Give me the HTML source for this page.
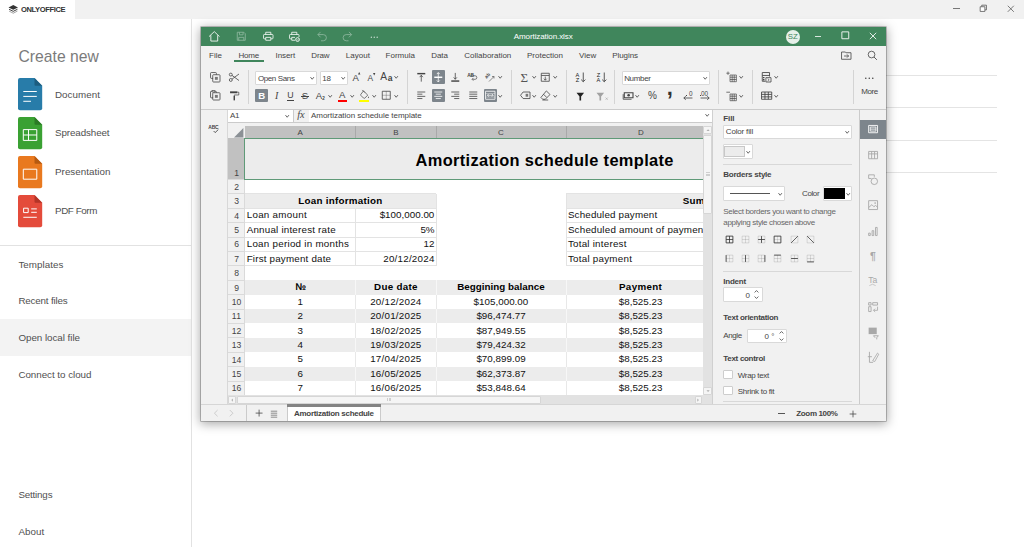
<!DOCTYPE html>
<html lang="en"><head><meta charset="utf-8"><title>ONLYOFFICE</title>
<style>
html,body{margin:0;padding:0}
body{width:1024px;height:547px;position:relative;overflow:hidden;background:#fff;font-family:"Liberation Sans",sans-serif;color:#444}
div,svg{position:absolute;box-sizing:border-box}
svg{overflow:visible}
.t{white-space:nowrap;line-height:1.2}
</style></head>
<body>
<div style="left:0px;top:0px;width:1024px;height:18.5px;background:#f1f1f1;"></div>
<div style="left:0px;top:0px;width:75px;height:18.5px;background:#fff;"></div>
<svg viewBox="0 0 20 20" style="left:8.25px;top:3.75px;width:10.5px;height:10.5px;color:#333;"><path d="M10 2 L19 6.5 L10 11 L1 6.5 Z" fill="currentColor"/><path d="M2 10 L10 14 L18 10" fill="none" stroke="currentColor" stroke-width="1.8"/><path d="M2 13.5 L10 17.5 L18 13.5" fill="none" stroke="currentColor" stroke-width="1.4" opacity=".6"/></svg>
<div class="t" style="left:21px;top:4.73px;font-size:7.6px;letter-spacing:-0.41px;font-weight:bold;color:#333;">ONLYOFFICE</div>
<div style="left:952.5px;top:8.3px;width:7.5px;height:1px;background:#777;"></div>
<svg viewBox="0 0 11 11" style="left:979px;top:4.4px;width:8.6px;height:8.6px;color:#555;"><path d="M3.5 3.5 V1.5 H9.5 V7.5 H7.5" fill="none" stroke="currentColor" stroke-width="1"/><path d="M1.5 3.5 H7.5 V9.5 H1.5 Z" fill="#fff" stroke="currentColor" stroke-width="1"/></svg>
<svg viewBox="0 0 10 10" style="left:1006.8px;top:5px;width:7.6px;height:7.6px;color:#555;"><path d="M1 1 L9 9 M9 1 L1 9" fill="none" stroke="currentColor" stroke-width="1"/></svg>
<div style="left:210px;top:74.6px;width:787px;height:1px;background:#e4e4e4;"></div>
<div style="left:210px;top:107.3px;width:787px;height:1px;background:#e4e4e4;"></div>
<div style="left:210px;top:139.5px;width:787px;height:1px;background:#e4e4e4;"></div>
<div style="left:210px;top:171.7px;width:787px;height:1px;background:#e4e4e4;"></div>
<div style="left:191px;top:18.5px;width:1px;height:528.5px;background:#e2e2e2;"></div>
<div class="t" style="left:18.4px;top:48.06px;font-size:15.7px;letter-spacing:0.03px;color:#7b7b7b;">Create new</div>
<svg viewBox="0 0 24.2 32.3" style="left:18.1px;top:78.1px;width:24.2px;height:32.3px"><path d="M2 0 H16.5 L24.2 7.7 V30.3 Q24.2 32.3 22.2 32.3 H2 Q0 32.3 0 30.3 V2 Q0 0 2 0 Z" fill="#287ca9"/><path d="M16.5 0 L24.2 7.7 H17.5 Q16.5 7.7 16.5 6.7 Z" fill="#1c5d80"/><path d="M5.3 13.5 H18.8 M5.3 18.4 H18.8 M5.3 23.3 H13" stroke="#fff" stroke-width="1" fill="none"/></svg>
<svg viewBox="0 0 24.2 32.3" style="left:18.1px;top:117.2px;width:24.2px;height:32.3px"><path d="M2 0 H16.5 L24.2 7.7 V30.3 Q24.2 32.3 22.2 32.3 H2 Q0 32.3 0 30.3 V2 Q0 0 2 0 Z" fill="#3aa133"/><path d="M16.5 0 L24.2 7.7 H17.5 Q16.5 7.7 16.5 6.7 Z" fill="#2a7a25"/><path d="M5.3 12.6 H18.8 V23.4 H5.3 Z M5.3 18 H18.8 M10.5 12.6 V23.4" stroke="#fff" stroke-width="1" fill="none"/></svg>
<svg viewBox="0 0 24.2 32.3" style="left:18.1px;top:156.3px;width:24.2px;height:32.3px"><path d="M2 0 H16.5 L24.2 7.7 V30.3 Q24.2 32.3 22.2 32.3 H2 Q0 32.3 0 30.3 V2 Q0 0 2 0 Z" fill="#e9791f"/><path d="M16.5 0 L24.2 7.7 H17.5 Q16.5 7.7 16.5 6.7 Z" fill="#b55a12"/><path d="M5.3 13.2 H18.8 V23.2 H5.3 Z" stroke="#fff" stroke-width="1" fill="none"/></svg>
<svg viewBox="0 0 24.2 32.3" style="left:18.1px;top:195.4px;width:24.2px;height:32.3px"><path d="M2 0 H16.5 L24.2 7.7 V30.3 Q24.2 32.3 22.2 32.3 H2 Q0 32.3 0 30.3 V2 Q0 0 2 0 Z" fill="#e44b3b"/><path d="M16.5 0 L24.2 7.7 H17.5 Q16.5 7.7 16.5 6.7 Z" fill="#b33528"/><path d="M5.6 13.2 H10.2 V17.6 H5.6 Z M13.2 13.9 H18.8 M13.2 17.3 H18.8 M5.3 22.3 H18.8" stroke="#fff" stroke-width="1" fill="none"/></svg>
<div class="t" style="left:55px;top:88.53px;font-size:9.8px;letter-spacing:0.04px;color:#505050;">Document</div>
<div class="t" style="left:55px;top:127.43px;font-size:9.8px;letter-spacing:-0.1px;color:#505050;">Spreadsheet</div>
<div class="t" style="left:55px;top:166.43px;font-size:9.8px;letter-spacing:0.04px;color:#505050;">Presentation</div>
<div class="t" style="left:55px;top:205.43px;font-size:9.8px;letter-spacing:-0.4px;color:#505050;">PDF Form</div>
<div style="left:0px;top:245.1px;width:191px;height:1px;background:#e2e2e2;"></div>
<div style="left:0px;top:319.2px;width:191px;height:36.4px;background:#f3f3f3;"></div>
<div class="t" style="left:18.4px;top:258.83px;font-size:9.8px;letter-spacing:0.05px;color:#505050;">Templates</div>
<div class="t" style="left:18.4px;top:295.43px;font-size:9.8px;letter-spacing:-0.18px;color:#505050;">Recent files</div>
<div class="t" style="left:18.4px;top:332.03px;font-size:9.8px;letter-spacing:-0.03px;color:#505050;">Open local file</div>
<div class="t" style="left:18.4px;top:368.63px;font-size:9.8px;letter-spacing:-0.03px;color:#505050;">Connect to cloud</div>
<div class="t" style="left:18.4px;top:489.43px;font-size:9.8px;letter-spacing:-0.18px;color:#505050;">Settings</div>
<div class="t" style="left:18.4px;top:525.73px;font-size:9.8px;letter-spacing:0.04px;color:#505050;">About</div>
<div style="left:200.6px;top:26.9px;width:685.4px;height:393.9px;background:#f1f1f1;box-shadow:0 2px 10px 1px rgba(0,0,0,.34),0 0 0 .6px rgba(0,0,0,.36);"></div>
<div style="left:200.6px;top:26.9px;width:685.4px;height:18.9px;background:#40865c;"></div>
<svg viewBox="0 0 20 20" style="left:207.12px;top:28.73px;width:14.55px;height:14.55px;color:#fff;"><path d="M2.8 10.4 L10 3.6 L17.2 10.4 M5.3 8.6 V16.6 H14.7 V8.6" fill="none" stroke="currentColor" stroke-width="1.15"/></svg>
<svg viewBox="0 0 20 20" style="left:233.72px;top:28.73px;width:14.55px;height:14.55px;color:#fff;opacity:0.4;"><path d="M4.5 4.5 H13.5 L15.5 6.5 V15.5 H4.5 Z M7.5 4.5 V8 H12.5 V4.5 M6.5 15.5 V11.5 H13.5 V15.5" fill="none" stroke="currentColor" stroke-width="1.2"/></svg>
<svg viewBox="0 0 20 20" style="left:260.73px;top:28.73px;width:14.55px;height:14.55px;color:#fff;"><path d="M6.5 7.5 V4.5 H13.5 V7.5 M6.5 13.5 H4.5 Q3.5 13.5 3.5 12.5 V8.5 Q3.5 7.5 4.5 7.5 H15.5 Q16.5 7.5 16.5 8.5 V12.5 Q16.5 13.5 15.5 13.5 H13.5 M6.5 11.5 H13.5 V15.5 H6.5 Z" fill="none" stroke="currentColor" stroke-width="1.1"/></svg>
<svg viewBox="0 0 20 20" style="left:287.23px;top:28.73px;width:14.55px;height:14.55px;color:#fff;"><path d="M6.5 7.5 V4.5 H13.5 V7.5 M6.5 13.5 H4.5 Q3.5 13.5 3.5 12.5 V8.5 Q3.5 7.5 4.5 7.5 H15.5 Q16.5 7.5 16.5 8.5 V11 M6.5 15.5 V11.5 H11 M6.5 15.5 H11" fill="none" stroke="currentColor" stroke-width="1.1"/><circle cx="14.5" cy="14.5" r="2.6" fill="none" stroke="currentColor" stroke-width="1.2"/><path d="M13.3 14.5 L14.3 15.5 L15.8 13.6" fill="none" stroke="currentColor" stroke-width="0.9"/></svg>
<svg viewBox="0 0 20 20" style="left:313.95px;top:28.45px;width:15.5px;height:15.5px;color:#fff;opacity:0.4;"><path d="M5 8.5 H12 A4 4 0 0 1 12 16.5 H9 M8.5 5 L5 8.5 L8.5 12" fill="none" stroke="currentColor" stroke-width="1.1"/></svg>
<svg viewBox="0 0 20 20" style="left:339.75px;top:28.45px;width:15.5px;height:15.5px;color:#fff;opacity:0.4;"><path d="M15 8.5 H8 A4 4 0 0 0 8 16.5 H11 M11.5 5 L15 8.5 L11.5 12" fill="none" stroke="currentColor" stroke-width="1.1"/></svg>
<svg viewBox="0 0 20 20" style="left:366.93px;top:29.52px;width:14.55px;height:14.55px;color:#fff;opacity:0.7;"><circle cx="6" cy="10" r="1" fill="currentColor"/><circle cx="10" cy="10" r="1" fill="currentColor"/><circle cx="14" cy="10" r="1" fill="currentColor"/></svg>
<div class="t" style="left:513.8px;top:32.09px;font-size:8px;letter-spacing:-0.1px;color:#fff;">Amortization.xlsx</div>
<div style="left:785.9px;top:29.7px;width:14px;height:14px;background:#e6f0e9;border-radius:50%;"></div>
<div class="t" style="left:787.8px;top:32.31px;font-size:7.8px;letter-spacing:0.12px;color:#40865c;">SZ</div>
<div style="left:814.6px;top:35.7px;width:6.8px;height:1px;background:rgba(255,255,255,.8);"></div>
<svg viewBox="0 0 10 10" style="left:841px;top:31.4px;width:8.6px;height:8.6px;color:#fff;opacity:0.92;"><path d="M1 1 H9 V9 H1 Z" fill="none" stroke="currentColor" stroke-width="1.1" stroke-linejoin="miter"/></svg>
<svg viewBox="0 0 10 10" style="left:868.5px;top:31.7px;width:8px;height:8px;color:#fff;opacity:0.95;"><path d="M1 1 L9 9 M9 1 L1 9" fill="none" stroke="currentColor" stroke-width="1.1"/></svg>
<div class="t" style="left:209px;top:51.09px;font-size:8px;letter-spacing:0.03px;">File</div>
<div class="t" style="left:238.5px;top:51.09px;font-size:8px;letter-spacing:-0.21px;">Home</div>
<div class="t" style="left:275.5px;top:51.09px;font-size:8px;letter-spacing:-0.08px;">Insert</div>
<div class="t" style="left:311.3px;top:51.09px;font-size:8px;letter-spacing:-0.12px;">Draw</div>
<div class="t" style="left:345.8px;top:51.09px;font-size:8px;letter-spacing:0.03px;">Layout</div>
<div class="t" style="left:385.5px;top:51.09px;font-size:8px;letter-spacing:0.02px;">Formula</div>
<div class="t" style="left:431.2px;top:51.09px;font-size:8px;letter-spacing:-0.02px;">Data</div>
<div class="t" style="left:464.3px;top:51.09px;font-size:8px;letter-spacing:-0.01px;">Collaboration</div>
<div class="t" style="left:527px;top:51.09px;font-size:8px;letter-spacing:0px;">Protection</div>
<div class="t" style="left:579px;top:51.09px;font-size:8px;letter-spacing:0.03px;">View</div>
<div class="t" style="left:612.3px;top:51.09px;font-size:8px;letter-spacing:-0.08px;">Plugins</div>
<div style="left:234px;top:60.4px;width:29.5px;height:1.4px;background:#40865c;"></div>
<svg viewBox="0 0 20 20" style="left:838.93px;top:48.02px;width:14.55px;height:14.55px;color:#444;"><path d="M3.5 5.5 H8.5 L9.5 6.5 H16.5 V15.5 H3.5 Z M7 11 H13 M11 8.8 L13.2 11 L11 13.2" fill="none" stroke="currentColor" stroke-width="1.1"/></svg>
<svg viewBox="0 0 20 20" style="left:865.23px;top:48.23px;width:14.55px;height:14.55px;color:#444;"><circle cx="9" cy="9" r="4.6" fill="none" stroke="currentColor" stroke-width="1.1"/><path d="M12.4 12.4 L16.3 16.3" fill="none" stroke="currentColor" stroke-width="1.2"/></svg>
<div style="left:200.6px;top:108.7px;width:685.4px;height:1px;background:#cbcbcb;"></div>
<div style="left:248.3px;top:69.5px;width:1px;height:34.5px;background:#d4d4d4;"></div>
<div style="left:407px;top:69.5px;width:1px;height:34.5px;background:#d4d4d4;"></div>
<div style="left:510.8px;top:69.5px;width:1px;height:34.5px;background:#d4d4d4;"></div>
<div style="left:565.8px;top:69.5px;width:1px;height:34.5px;background:#d4d4d4;"></div>
<div style="left:614px;top:69.5px;width:1px;height:34.5px;background:#d4d4d4;"></div>
<div style="left:717.8px;top:69.5px;width:1px;height:34.5px;background:#d4d4d4;"></div>
<div style="left:752px;top:69.5px;width:1px;height:34.5px;background:#d4d4d4;"></div>
<div style="left:853px;top:69.5px;width:1px;height:34.5px;background:#d4d4d4;"></div>
<svg viewBox="0 0 20 20" style="left:207.53px;top:70.22px;width:14.55px;height:14.55px;color:#444;"><path d="M7 11.5 H4.5 Q3.5 11.5 3.5 10.5 V4.5 Q3.5 3.5 4.5 3.5 H10.5 Q11.5 3.5 11.5 4.5 V6.5" fill="none" stroke="currentColor" stroke-width="1.1"/><path d="M7.5 6.5 H15.5 Q16.5 6.5 16.5 7.5 V15.5 Q16.5 16.5 15.5 16.5 H7.5 Q6.5 16.5 6.5 15.5 V7.5 Q6.5 6.5 7.5 6.5 Z" fill="none" stroke="currentColor" stroke-width="1.1"/><path d="M9.5 9.5 H13.5 V13.5 H9.5 Z" fill="currentColor" opacity=".7"/></svg>
<svg viewBox="0 0 20 20" style="left:227.12px;top:69.92px;width:14.55px;height:14.55px;color:#444;"><circle cx="5.2" cy="6.3" r="2" fill="none" stroke="currentColor" stroke-width="1.1"/><circle cx="5.2" cy="13.7" r="2" fill="none" stroke="currentColor" stroke-width="1.1"/><path d="M6.9 7.4 L16.5 14.5 M6.9 12.6 L16.5 5.5" fill="none" stroke="currentColor" stroke-width="1.1"/></svg>
<svg viewBox="0 0 20 20" style="left:207.53px;top:88.32px;width:14.55px;height:14.55px;color:#444;"><path d="M7 13.5 H4.5 Q3.5 13.5 3.5 12.5 V5.5 Q3.5 4.5 4.5 4.5 H5.5 M9.5 4.5 H10.5 Q11.5 4.5 11.5 5.5 V6.5" fill="none" stroke="currentColor" stroke-width="1.1"/><path d="M5.5 3.5 H9.5 V5.5 H5.5 Z" fill="none" stroke="currentColor" stroke-width="1"/><path d="M7.5 6.5 H15.5 Q16.5 6.5 16.5 7.5 V15.5 Q16.5 16.5 15.5 16.5 H7.5 Q6.5 16.5 6.5 15.5 V7.5 Q6.5 6.5 7.5 6.5 Z" fill="none" stroke="currentColor" stroke-width="1.1"/><path d="M9.5 9.5 H13.5 V13.5 H9.5 Z" fill="currentColor" opacity=".7"/></svg>
<svg viewBox="0 0 20 20" style="left:227.22px;top:88.32px;width:14.55px;height:14.55px;color:#444;"><path d="M4.2 4.6 H14.2 V7.2 H4.2 Z" fill="currentColor"/><path d="M14.2 5.8 H16.2 V9.6 H10 V11" fill="none" stroke="currentColor" stroke-width="1"/><path d="M9 11 H11 V17 H9 Z" fill="currentColor"/></svg>
<div style="left:255.3px;top:70.5px;width:62.1px;height:14.5px;background:#fff;border:.7px solid #d9d9d9;border-radius:1px;"></div>
<div class="t" style="left:257.9px;top:73.74px;font-size:8px;letter-spacing:-0.38px;">Open Sans</div>
<svg viewBox="0 0 8 8" style="left:310px;top:75.75px;width:4.4px;height:4.4px;color:#444;"><path d="M0.9 2.1 L4 5.9 L7.1 2.1" fill="none" stroke="currentColor" stroke-width="1.5"/></svg>
<div style="left:319.6px;top:70.5px;width:28.4px;height:14.5px;background:#fff;border:.7px solid #d9d9d9;border-radius:1px;"></div>
<div class="t" style="left:322.2px;top:73.74px;font-size:8px;letter-spacing:-0.15px;">18</div>
<svg viewBox="0 0 8 8" style="left:340.6px;top:75.75px;width:4.4px;height:4.4px;color:#444;"><path d="M0.9 2.1 L4 5.9 L7.1 2.1" fill="none" stroke="currentColor" stroke-width="1.5"/></svg>
<div class="t" style="left:352.4px;top:71.75px;font-size:9.6px;">A</div>
<svg viewBox="0 0 3 3" style="left:358.4px;top:72.4px;width:2.4px;height:2.4px;color:#444;"><path d="M0 3 L1.5 0 L3 3 Z" fill="currentColor"/></svg>
<div class="t" style="left:367.5px;top:72.76px;font-size:8.4px;">A</div>
<svg viewBox="0 0 3 3" style="left:372.8px;top:72.6px;width:2.4px;height:2.4px;color:#444;"><path d="M0 0 L1.5 3 L3 0 Z" fill="currentColor"/></svg>
<div class="t" style="left:380.2px;top:71.2px;font-size:10.2px;">A</div>
<div class="t" style="left:387.64px;top:73.3px;font-size:8.5px;font-weight:bold;">a</div>
<svg viewBox="0 0 8 8" style="left:394.4px;top:75.3px;width:4.4px;height:4.4px;color:#444;"><path d="M0.9 2.1 L4 5.9 L7.1 2.1" fill="none" stroke="currentColor" stroke-width="1.5"/></svg>
<div style="left:255px;top:89px;width:13.3px;height:13.3px;background:#7d858c;border-radius:1px;"></div>
<div class="t" style="left:258.23px;top:90.05px;font-size:9.6px;font-weight:bold;color:#fff;">B</div>
<div class="t" style="left:275.01px;top:89.81px;font-size:10px;font-style:italic;font-family:'Liberation Serif',serif;">I</div>
<div class="t" style="left:287.32px;top:90.02px;font-size:8.8px;">U</div>
<div style="left:286.8px;top:100px;width:7.4px;height:0.8px;background:#444;"></div>
<div class="t" style="left:301.8px;top:90.05px;font-size:9.6px;">S</div>
<div style="left:300.6px;top:95.8px;width:8.8px;height:0.8px;background:#444;"></div>
<div class="t" style="left:315.8px;top:89.75px;font-size:9.6px;">A</div>
<div class="t" style="left:322.32px;top:95.99px;font-size:4.6px;font-weight:bold;">2</div>
<svg viewBox="0 0 8 8" style="left:327.8px;top:93.8px;width:4.4px;height:4.4px;color:#444;"><path d="M0.9 2.1 L4 5.9 L7.1 2.1" fill="none" stroke="currentColor" stroke-width="1.5"/></svg>
<div class="t" style="left:339px;top:88.95px;font-size:9.6px;">A</div>
<div style="left:337.5px;top:100px;width:9.6px;height:2.1px;background:#f00;"></div>
<svg viewBox="0 0 8 8" style="left:349.8px;top:93.8px;width:4.4px;height:4.4px;color:#444;"><path d="M0.9 2.1 L4 5.9 L7.1 2.1" fill="none" stroke="currentColor" stroke-width="1.5"/></svg>
<svg viewBox="0 0 20 20" style="left:357.5px;top:87.9px;width:13px;height:13px;color:#444;"><path d="M8.5 4.5 L15 11 L10.5 15.5 Q9.5 16.3 8.5 15.5 L4.5 11.5 Q3.7 10.5 4.5 9.5 Z M6.5 3 L10.5 7" fill="none" stroke="currentColor" stroke-width="1.1"/><path d="M16 12.5 Q17.6 15 16 15.6 Q14.4 15 16 12.5Z" fill="currentColor"/></svg>
<div style="left:359.2px;top:100px;width:9.8px;height:2.1px;background:#ff0;"></div>
<svg viewBox="0 0 8 8" style="left:371.8px;top:93.8px;width:4.4px;height:4.4px;color:#444;"><path d="M0.9 2.1 L4 5.9 L7.1 2.1" fill="none" stroke="currentColor" stroke-width="1.5"/></svg>
<svg viewBox="0 0 20 20" style="left:378.73px;top:88.32px;width:14.55px;height:14.55px;color:#444;"><path d="M4.5 4.5 H15.5 V15.5 H4.5 Z" fill="none" stroke="currentColor" stroke-width="1.1"/><path d="M10 4.5 V15.5 M4.5 10 H15.5" fill="none" stroke="currentColor" stroke-width="0.8" opacity=".6"/></svg>
<svg viewBox="0 0 8 8" style="left:394.4px;top:93.8px;width:4.4px;height:4.4px;color:#444;"><path d="M0.9 2.1 L4 5.9 L7.1 2.1" fill="none" stroke="currentColor" stroke-width="1.5"/></svg>
<svg viewBox="0 0 20 20" style="left:413.73px;top:69.92px;width:14.55px;height:14.55px;color:#444;"><path d="M4.5 5 H15.5" fill="none" stroke="currentColor" stroke-width="2"/><path d="M10 7 V16 M7.8 9.8 L10 7.4 L12.2 9.8" fill="none" stroke="currentColor" stroke-width="1.1"/></svg>
<div style="left:431.5px;top:70.4px;width:13.5px;height:13.5px;background:#7d858c;border-radius:1px;"></div>
<svg viewBox="0 0 20 20" style="left:430.93px;top:69.92px;width:14.55px;height:14.55px;color:#fff;"><path d="M4.5 10 H15.5" fill="none" stroke="currentColor" stroke-width="2"/><path d="M10 3.5 V16.5 M8 5.6 L10 3.6 L12 5.6 M8 14.4 L10 16.4 L12 14.4" fill="none" stroke="currentColor" stroke-width="1.1"/></svg>
<svg viewBox="0 0 20 20" style="left:448.33px;top:69.92px;width:14.55px;height:14.55px;color:#444;"><path d="M4.5 15.2 H15.5" fill="none" stroke="currentColor" stroke-width="2"/><path d="M10 4 V13 M7.8 10.2 L10 12.6 L12.2 10.2" fill="none" stroke="currentColor" stroke-width="1.1"/></svg>
<div class="t" style="left:467.13px;top:72.68px;font-size:4.8px;font-weight:bold;">AB</div>
<svg viewBox="0 0 20 20" style="left:469.1px;top:72.9px;width:11px;height:11px;color:#444;"><path d="M3 5 H11 A3 3 0 0 1 11 11.5 H6 M8 9 L5.5 11.5 L8 14" fill="none" stroke="currentColor" stroke-width="1.2"/></svg>
<div class="t" style="left:485.4px;top:73.08px;font-size:4.8px;font-weight:bold;transform:rotate(-45deg);">ab</div>
<svg viewBox="0 0 20 20" style="left:486.5px;top:73.6px;width:10px;height:10px;color:#444;"><path d="M4 15 L14 5 M10 5 H14 V9" fill="none" stroke="currentColor" stroke-width="1.2"/></svg>
<svg viewBox="0 0 8 8" style="left:498px;top:75.4px;width:4.4px;height:4.4px;color:#444;"><path d="M0.9 2.1 L4 5.9 L7.1 2.1" fill="none" stroke="currentColor" stroke-width="1.5"/></svg>
<svg viewBox="0 0 20 20" style="left:413.73px;top:88.32px;width:14.55px;height:14.55px;color:#444;"><path d="M4.5 5.5 H15.5 M4.5 8.5 H11.5 M4.5 11.5 H15.5 M4.5 14.5 H11.5 " fill="none" stroke="currentColor" stroke-width="1.1"/></svg>
<div style="left:431.5px;top:88.9px;width:13.5px;height:13.4px;background:#7d858c;border-radius:1px;"></div>
<svg viewBox="0 0 20 20" style="left:430.93px;top:88.32px;width:14.55px;height:14.55px;color:#fff;"><path d="M4.5 5.5 H15.5 M6.5 8.5 H13.5 M4.5 11.5 H15.5 M6.5 14.5 H13.5 " fill="none" stroke="currentColor" stroke-width="1.1"/></svg>
<svg viewBox="0 0 20 20" style="left:448.33px;top:88.32px;width:14.55px;height:14.55px;color:#444;"><path d="M4.5 5.5 H15.5 M8.5 8.5 H15.5 M4.5 11.5 H15.5 M8.5 14.5 H15.5 " fill="none" stroke="currentColor" stroke-width="1.1"/></svg>
<svg viewBox="0 0 20 20" style="left:465.73px;top:88.32px;width:14.55px;height:14.55px;color:#444;"><path d="M4.5 5.5 H15.5 M4.5 8.5 H15.5 M4.5 11.5 H15.5 M4.5 14.5 H15.5 " fill="none" stroke="currentColor" stroke-width="1.1"/></svg>
<div style="left:483.7px;top:88.9px;width:13.5px;height:13.4px;background:#7d858c;border-radius:1px;"></div>
<svg viewBox="0 0 20 20" style="left:483.12px;top:88.32px;width:14.55px;height:14.55px;color:#fff;"><path d="M3.5 4.5 H16.5 V15.5 H3.5 Z" fill="none" stroke="currentColor" stroke-width="1.1"/><path d="M3.5 7.5 H16.5 M3.5 12.5 H16.5" fill="none" stroke="currentColor" stroke-width="0.8" opacity=".7"/><path d="M6 10 H14 M8 8 L6 10 L8 12 M12 8 L14 10 L12 12" fill="none" stroke="currentColor" stroke-width="1"/></svg>
<svg viewBox="0 0 8 8" style="left:498px;top:93.8px;width:4.4px;height:4.4px;color:#444;"><path d="M0.9 2.1 L4 5.9 L7.1 2.1" fill="none" stroke="currentColor" stroke-width="1.5"/></svg>
<div class="t" style="left:520.38px;top:69.95px;font-size:13px;color:#555;font-family:'Liberation Serif',serif;">Σ</div>
<svg viewBox="0 0 8 8" style="left:532.4px;top:75.4px;width:4.4px;height:4.4px;color:#444;"><path d="M0.9 2.1 L4 5.9 L7.1 2.1" fill="none" stroke="currentColor" stroke-width="1.5"/></svg>
<svg viewBox="0 0 20 20" style="left:538.12px;top:69.92px;width:14.55px;height:14.55px;color:#444;"><path d="M4.5 4.5 H15.5 V15.5 H4.5 Z M4.5 7.5 H15.5" fill="none" stroke="currentColor" stroke-width="1.1"/><path d="M10 9 V14 M8 12 L10 14 L12 12" fill="none" stroke="currentColor" stroke-width="1"/></svg>
<svg viewBox="0 0 8 8" style="left:553.2px;top:75.4px;width:4.4px;height:4.4px;color:#444;"><path d="M0.9 2.1 L4 5.9 L7.1 2.1" fill="none" stroke="currentColor" stroke-width="1.5"/></svg>
<svg viewBox="0 0 20 20" style="left:517.52px;top:88.32px;width:14.55px;height:14.55px;color:#444;"><path d="M7 5.5 H16.5 V14.5 H7 L3.5 10 Z" fill="none" stroke="currentColor" stroke-width="1.1"/><path d="M10.5 8 H14 V12 H10.5 Z" fill="currentColor" opacity=".7"/></svg>
<svg viewBox="0 0 8 8" style="left:532.4px;top:93.8px;width:4.4px;height:4.4px;color:#444;"><path d="M0.9 2.1 L4 5.9 L7.1 2.1" fill="none" stroke="currentColor" stroke-width="1.5"/></svg>
<svg viewBox="0 0 20 20" style="left:538.12px;top:88.32px;width:14.55px;height:14.55px;color:#444;"><path d="M11.5 4 L16.5 9 L10 15.5 H6.5 L4 13 Z M7.5 8.5 L12 13 M6 16.5 H14" fill="none" stroke="currentColor" stroke-width="1.1"/></svg>
<svg viewBox="0 0 8 8" style="left:553.2px;top:93.8px;width:4.4px;height:4.4px;color:#444;"><path d="M0.9 2.1 L4 5.9 L7.1 2.1" fill="none" stroke="currentColor" stroke-width="1.5"/></svg>
<div class="t" style="left:575.6px;top:71.85px;font-size:5.7px;color:#222;">A</div>
<div class="t" style="left:575.76px;top:77.15px;font-size:5.7px;color:#222;">Z</div>
<svg viewBox="0 0 20 20" style="left:577.55px;top:71.95px;width:10.5px;height:10.5px;color:#444;"><path d="M10 1 V18.5 M6 14.5 L10 18.5 L14 14.5" fill="none" stroke="currentColor" stroke-width="1.7"/></svg>
<div class="t" style="left:596.76px;top:71.85px;font-size:5.7px;color:#222;">Z</div>
<div class="t" style="left:596.6px;top:77.15px;font-size:5.7px;color:#222;">A</div>
<svg viewBox="0 0 20 20" style="left:598.55px;top:71.95px;width:10.5px;height:10.5px;color:#444;"><path d="M10 1 V18.5 M6 14.5 L10 18.5 L14 14.5" fill="none" stroke="currentColor" stroke-width="1.7"/></svg>
<svg viewBox="0 0 20 20" style="left:573.7px;top:89.5px;width:12.6px;height:12.6px;color:#222;"><path d="M4 4.5 H16 L11.3 10.5 V16.5 H8.7 V10.5 Z" fill="currentColor"/></svg>
<svg viewBox="0 0 20 20" style="left:593.7px;top:89.5px;width:12.6px;height:12.6px;color:#444;opacity:0.45;"><path d="M4 4.5 H16 L11.3 10.5 V16.5 H8.7 V10.5 Z" fill="currentColor"/></svg>
<svg viewBox="0 0 6 6" style="left:604.6px;top:96.9px;width:3.4px;height:3.4px;color:#444;opacity:0.45;"><path d="M1 1 L5 5 M5 1 L1 5" fill="none" stroke="currentColor" stroke-width="1"/></svg>
<div style="left:621.6px;top:70.5px;width:88.8px;height:14.5px;background:#fff;border:.7px solid #d9d9d9;border-radius:1px;"></div>
<div class="t" style="left:624.2px;top:73.74px;font-size:8px;letter-spacing:-0.34px;">Number</div>
<svg viewBox="0 0 8 8" style="left:703px;top:75.75px;width:4.4px;height:4.4px;color:#444;"><path d="M0.9 2.1 L4 5.9 L7.1 2.1" fill="none" stroke="currentColor" stroke-width="1.5"/></svg>
<svg viewBox="0 0 20 20" style="left:620.73px;top:88.32px;width:14.55px;height:14.55px;color:#444;"><path d="M4.5 6.5 H16.5 V13.5 H4.5 Z" fill="none" stroke="currentColor" stroke-width="1.5"/><circle cx="10.5" cy="10" r="1.8" fill="currentColor"/><path d="M3 8.5 V15.5 H14.5" fill="none" stroke="currentColor" stroke-width="1.1"/></svg>
<svg viewBox="0 0 8 8" style="left:635.4px;top:93.8px;width:4.4px;height:4.4px;color:#444;"><path d="M0.9 2.1 L4 5.9 L7.1 2.1" fill="none" stroke="currentColor" stroke-width="1.5"/></svg>
<div class="t" style="left:648.05px;top:89.81px;font-size:10px;">%</div>
<div class="t" style="left:666.74px;top:74.95px;font-size:22px;font-weight:bold;color:#333;">,</div>
<div class="t" style="left:689.02px;top:90.33px;font-size:6.4px;">0</div>
<div style="left:686.2px;top:95.2px;width:1.1px;height:1.1px;background:#444;"></div>
<svg viewBox="0 0 18 18" style="left:682.8px;top:93.3px;width:10px;height:10px;color:#444;"><path d="M1.5 9 H17 M5 5.8 L1.5 9 L5 12.2" fill="none" stroke="currentColor" stroke-width="1.5"/></svg>
<div class="t" style="left:701.1px;top:90.33px;font-size:6.4px;letter-spacing:-0.26px;">00</div>
<div style="left:699.6px;top:95.2px;width:1.1px;height:1.1px;background:#444;"></div>
<svg viewBox="0 0 18 18" style="left:699.6px;top:93.3px;width:10px;height:10px;color:#444;"><path d="M1 9 H16.5 M13 5.8 L16.5 9 L13 12.2" fill="none" stroke="currentColor" stroke-width="1.5"/></svg>
<svg viewBox="0 0 20 20" style="left:724.6px;top:70.3px;width:13.4px;height:13.4px;color:#444;"><path d="M7.5 7.5 H17 V17.5 H7.5 Z M10.7 7.5 V17.5 M13.8 7.5 V17.5 M7.5 10.8 H17 M7.5 14.2 H17" fill="none" stroke="currentColor" stroke-width="1"/><path d="M2 4.8 H7 M4.5 2.3 V7.3" fill="none" stroke="currentColor" stroke-width="1"/></svg>
<svg viewBox="0 0 8 8" style="left:739.4px;top:75.4px;width:4.4px;height:4.4px;color:#444;"><path d="M0.9 2.1 L4 5.9 L7.1 2.1" fill="none" stroke="currentColor" stroke-width="1.5"/></svg>
<svg viewBox="0 0 20 20" style="left:724.6px;top:88.7px;width:13.4px;height:13.4px;color:#444;"><path d="M7.5 7.5 H17 V17.5 H7.5 Z M10.7 7.5 V17.5 M13.8 7.5 V17.5 M7.5 10.8 H17 M7.5 14.2 H17" fill="none" stroke="currentColor" stroke-width="1"/><path d="M2 4.8 H7.5" fill="none" stroke="currentColor" stroke-width="1.1"/></svg>
<svg viewBox="0 0 8 8" style="left:739.4px;top:93.8px;width:4.4px;height:4.4px;color:#444;"><path d="M0.9 2.1 L4 5.9 L7.1 2.1" fill="none" stroke="currentColor" stroke-width="1.5"/></svg>
<svg viewBox="0 0 20 20" style="left:758.73px;top:69.92px;width:14.55px;height:14.55px;color:#444;"><path d="M4.5 3.5 H14.5 V9 M4.5 3.5 V15.5 H8.5 M4.5 7.5 H14.5" fill="none" stroke="currentColor" stroke-width="1.2"/><path d="M9.5 10.5 H16.5 V16.5 H9.5 Z" fill="none" stroke="currentColor" stroke-width="1.1"/><path d="M5.5 9.5 H7.5 V11.5 H5.5 Z M5.5 12.5 H7.5 V14.5 H5.5 Z" fill="currentColor"/><path d="M12 12 L14 13.5 L12 15" fill="none" stroke="currentColor" stroke-width="0.9"/></svg>
<svg viewBox="0 0 8 8" style="left:774.1px;top:75.4px;width:4.4px;height:4.4px;color:#444;"><path d="M0.9 2.1 L4 5.9 L7.1 2.1" fill="none" stroke="currentColor" stroke-width="1.5"/></svg>
<svg viewBox="0 0 20 20" style="left:758.73px;top:88.32px;width:14.55px;height:14.55px;color:#444;"><path d="M3.5 5.5 H17.5 V15.5 H3.5 Z M3.5 8.8 H17.5 M3.5 12.2 H17.5 M8.2 5.5 V15.5 M12.8 5.5 V15.5" fill="none" stroke="currentColor" stroke-width="1.2"/></svg>
<svg viewBox="0 0 8 8" style="left:774.1px;top:93.8px;width:4.4px;height:4.4px;color:#444;"><path d="M0.9 2.1 L4 5.9 L7.1 2.1" fill="none" stroke="currentColor" stroke-width="1.5"/></svg>
<svg viewBox="0 0 20 20" style="left:862.12px;top:71.32px;width:14.55px;height:14.55px;color:#444;"><circle cx="5.2" cy="10" r="1.1" fill="currentColor"/><circle cx="10" cy="10" r="1.1" fill="currentColor"/><circle cx="14.8" cy="10" r="1.1" fill="currentColor"/></svg>
<div class="t" style="left:861.2px;top:87.09px;font-size:8px;letter-spacing:-0.41px;">More</div>
<div style="left:227.5px;top:109.7px;width:66px;height:12.6px;background:#fff;"></div>
<div class="t" style="left:230px;top:111.19px;font-size:8px;letter-spacing:-0.29px;">A1</div>
<svg viewBox="0 0 8 8" style="left:284.6px;top:114px;width:4.4px;height:4.4px;color:#444;"><path d="M0.9 2.1 L4 5.9 L7.1 2.1" fill="none" stroke="currentColor" stroke-width="1.5"/></svg>
<div style="left:293.2px;top:109.7px;width:1px;height:12.6px;background:#cbcbcb;"></div>
<div class="t" style="left:297.16px;top:109.08px;font-size:10.4px;font-style:italic;color:#4a4a4a;font-family:'Liberation Serif',serif;">fx</div>
<div style="left:308.5px;top:109.7px;width:404px;height:12.6px;background:#fff;"></div>
<div class="t" style="left:311px;top:111.19px;font-size:8px;letter-spacing:-0.03px;">Amortization schedule template</div>
<svg viewBox="0 0 8 8" style="left:705.1px;top:113.4px;width:4.4px;height:4.4px;color:#444;"><path d="M0.9 2.1 L4 5.9 L7.1 2.1" fill="none" stroke="currentColor" stroke-width="1.5"/></svg>
<div style="left:227.5px;top:122.3px;width:485.2px;height:1px;background:#cbcbcb;"></div>
<div style="left:226.7px;top:109.7px;width:1px;height:294.8px;background:#d8d8d8;"></div>
<div class="t" style="left:208.2px;top:125.02px;font-size:4.9px;letter-spacing:-0.07px;font-weight:bold;">ABC</div>
<svg viewBox="0 0 9 9" style="left:212.6px;top:128.6px;width:6px;height:6px;color:#444;"><path d="M1 3 L3.2 5.4 L8 0.8" fill="none" stroke="currentColor" stroke-width="1.3"/></svg>
<div style="left:227.7px;top:126px;width:475.3px;height:269px;overflow:hidden;background:#fff;">
<div style="left:0px;top:0px;width:475.3px;height:12px;background:#c1c1c1;"></div>
<div style="left:0px;top:0px;width:17.6px;height:12px;background:#f1f1f1;"></div>
<svg viewBox="0 0 8 8" style="left:6.8px;top:1.7px;width:9.4px;height:9.4px;color:#8b9095;"><path d="M8 0 V8 H0 Z" fill="currentColor"/></svg>
<div class="t" style="left:69.93px;top:2.49px;font-size:8px;">A</div>
<div class="t" style="left:165.53px;top:2.49px;font-size:8px;">B</div>
<div style="left:127.7px;top:0px;width:0.8px;height:12px;background:#a9a9a9;"></div>
<div class="t" style="left:270.41px;top:2.49px;font-size:8px;">C</div>
<div style="left:207.9px;top:0px;width:0.8px;height:12px;background:#a9a9a9;"></div>
<div class="t" style="left:410.41px;top:2.49px;font-size:8px;">D</div>
<div style="left:337.9px;top:0px;width:0.8px;height:12px;background:#a9a9a9;"></div>
<div style="left:0px;top:12px;width:17.1px;height:257px;background:#f1f1f1;"></div>
<div style="left:0px;top:12px;width:17.1px;height:41.4px;background:#c1c1c1;"></div>
<div class="t" style="left:6.5px;top:41.94px;font-size:8.6px;letter-spacing:0.02px;">1</div>
<div class="t" style="left:6.5px;top:55.74px;font-size:8.6px;letter-spacing:0.02px;">2</div>
<div style="left:0px;top:53px;width:17.1px;height:0.8px;background:#dadada;"></div>
<div class="t" style="left:6.5px;top:70.14px;font-size:8.6px;letter-spacing:0.02px;">3</div>
<div style="left:0px;top:67.4px;width:17.1px;height:0.8px;background:#dadada;"></div>
<div class="t" style="left:6.5px;top:84.54px;font-size:8.6px;letter-spacing:0.02px;">4</div>
<div style="left:0px;top:81.8px;width:17.1px;height:0.8px;background:#dadada;"></div>
<div class="t" style="left:6.5px;top:98.94px;font-size:8.6px;letter-spacing:0.02px;">5</div>
<div style="left:0px;top:96.2px;width:17.1px;height:0.8px;background:#dadada;"></div>
<div class="t" style="left:6.5px;top:113.34px;font-size:8.6px;letter-spacing:0.02px;">6</div>
<div style="left:0px;top:110.6px;width:17.1px;height:0.8px;background:#dadada;"></div>
<div class="t" style="left:6.5px;top:127.74px;font-size:8.6px;letter-spacing:0.02px;">7</div>
<div style="left:0px;top:125px;width:17.1px;height:0.8px;background:#dadada;"></div>
<div class="t" style="left:6.5px;top:142.14px;font-size:8.6px;letter-spacing:0.02px;">8</div>
<div style="left:0px;top:139.4px;width:17.1px;height:0.8px;background:#dadada;"></div>
<div class="t" style="left:6.5px;top:156.54px;font-size:8.6px;letter-spacing:0.02px;">9</div>
<div style="left:0px;top:153.8px;width:17.1px;height:0.8px;background:#dadada;"></div>
<div class="t" style="left:4.1px;top:170.94px;font-size:8.6px;letter-spacing:0.02px;">10</div>
<div style="left:0px;top:168.2px;width:17.1px;height:0.8px;background:#dadada;"></div>
<div class="t" style="left:4.1px;top:185.34px;font-size:8.6px;letter-spacing:0.34px;">11</div>
<div style="left:0px;top:182.6px;width:17.1px;height:0.8px;background:#dadada;"></div>
<div class="t" style="left:4.1px;top:199.74px;font-size:8.6px;letter-spacing:0.02px;">12</div>
<div style="left:0px;top:197px;width:17.1px;height:0.8px;background:#dadada;"></div>
<div class="t" style="left:4.1px;top:214.14px;font-size:8.6px;letter-spacing:0.02px;">13</div>
<div style="left:0px;top:211.4px;width:17.1px;height:0.8px;background:#dadada;"></div>
<div class="t" style="left:4.1px;top:228.54px;font-size:8.6px;letter-spacing:0.02px;">14</div>
<div style="left:0px;top:225.8px;width:17.1px;height:0.8px;background:#dadada;"></div>
<div class="t" style="left:4.1px;top:242.94px;font-size:8.6px;letter-spacing:0.02px;">15</div>
<div style="left:0px;top:240.2px;width:17.1px;height:0.8px;background:#dadada;"></div>
<div class="t" style="left:4.1px;top:257.34px;font-size:8.6px;letter-spacing:0.02px;">16</div>
<div style="left:0px;top:254.6px;width:17.1px;height:0.8px;background:#dadada;"></div>
<div style="left:16.7px;top:53.4px;width:0.8px;height:215.6px;background:#dadada;"></div>
<div style="left:17.1px;top:12px;width:458.2px;height:41.4px;background:#ececec;"></div>
<div style="left:17.1px;top:67.8px;width:191.2px;height:14.4px;background:#ececec;"></div>
<div style="left:338.3px;top:67.8px;width:137px;height:14.4px;background:#ececec;"></div>
<div style="left:17.1px;top:154.2px;width:458.2px;height:14.4px;background:#ececec;"></div>
<div style="left:17.1px;top:183px;width:458.2px;height:14.4px;background:#ececec;"></div>
<div style="left:17.1px;top:211.8px;width:458.2px;height:14.4px;background:#ececec;"></div>
<div style="left:17.1px;top:240.6px;width:458.2px;height:14.4px;background:#ececec;"></div>
<div style="left:17.1px;top:67.4px;width:191.2px;height:0.8px;background:#e3e3e3;"></div>
<div style="left:338.3px;top:67.4px;width:137px;height:0.8px;background:#e3e3e3;"></div>
<div style="left:17.1px;top:81.8px;width:191.2px;height:0.8px;background:#e3e3e3;"></div>
<div style="left:338.3px;top:81.8px;width:137px;height:0.8px;background:#e3e3e3;"></div>
<div style="left:17.1px;top:96.2px;width:191.2px;height:0.8px;background:#e3e3e3;"></div>
<div style="left:338.3px;top:96.2px;width:137px;height:0.8px;background:#e3e3e3;"></div>
<div style="left:17.1px;top:110.6px;width:191.2px;height:0.8px;background:#e3e3e3;"></div>
<div style="left:338.3px;top:110.6px;width:137px;height:0.8px;background:#e3e3e3;"></div>
<div style="left:17.1px;top:125px;width:191.2px;height:0.8px;background:#e3e3e3;"></div>
<div style="left:338.3px;top:125px;width:137px;height:0.8px;background:#e3e3e3;"></div>
<div style="left:17.1px;top:139.4px;width:191.2px;height:0.8px;background:#e3e3e3;"></div>
<div style="left:338.3px;top:139.4px;width:137px;height:0.8px;background:#e3e3e3;"></div>
<div style="left:127.7px;top:82.2px;width:0.8px;height:57.6px;background:#e3e3e3;"></div>
<div style="left:207.9px;top:67.8px;width:0.8px;height:72px;background:#e3e3e3;"></div>
<div style="left:337.9px;top:67.8px;width:0.8px;height:72px;background:#e3e3e3;"></div>
<div style="left:127.7px;top:154.2px;width:0.8px;height:14.4px;background:#f7f7f7;"></div>
<div style="left:207.9px;top:154.2px;width:0.8px;height:14.4px;background:#f7f7f7;"></div>
<div style="left:337.9px;top:154.2px;width:0.8px;height:14.4px;background:#f7f7f7;"></div>
<div style="left:127.7px;top:168.6px;width:0.8px;height:14.4px;background:#e8e8e8;"></div>
<div style="left:207.9px;top:168.6px;width:0.8px;height:14.4px;background:#e8e8e8;"></div>
<div style="left:337.9px;top:168.6px;width:0.8px;height:14.4px;background:#e8e8e8;"></div>
<div style="left:127.7px;top:183px;width:0.8px;height:14.4px;background:#f7f7f7;"></div>
<div style="left:207.9px;top:183px;width:0.8px;height:14.4px;background:#f7f7f7;"></div>
<div style="left:337.9px;top:183px;width:0.8px;height:14.4px;background:#f7f7f7;"></div>
<div style="left:127.7px;top:197.4px;width:0.8px;height:14.4px;background:#e8e8e8;"></div>
<div style="left:207.9px;top:197.4px;width:0.8px;height:14.4px;background:#e8e8e8;"></div>
<div style="left:337.9px;top:197.4px;width:0.8px;height:14.4px;background:#e8e8e8;"></div>
<div style="left:127.7px;top:211.8px;width:0.8px;height:14.4px;background:#f7f7f7;"></div>
<div style="left:207.9px;top:211.8px;width:0.8px;height:14.4px;background:#f7f7f7;"></div>
<div style="left:337.9px;top:211.8px;width:0.8px;height:14.4px;background:#f7f7f7;"></div>
<div style="left:127.7px;top:226.2px;width:0.8px;height:14.4px;background:#e8e8e8;"></div>
<div style="left:207.9px;top:226.2px;width:0.8px;height:14.4px;background:#e8e8e8;"></div>
<div style="left:337.9px;top:226.2px;width:0.8px;height:14.4px;background:#e8e8e8;"></div>
<div style="left:127.7px;top:240.6px;width:0.8px;height:14.4px;background:#f7f7f7;"></div>
<div style="left:207.9px;top:240.6px;width:0.8px;height:14.4px;background:#f7f7f7;"></div>
<div style="left:337.9px;top:240.6px;width:0.8px;height:14.4px;background:#f7f7f7;"></div>
<div style="left:127.7px;top:255px;width:0.8px;height:14.4px;background:#e8e8e8;"></div>
<div style="left:207.9px;top:255px;width:0.8px;height:14.4px;background:#e8e8e8;"></div>
<div style="left:337.9px;top:255px;width:0.8px;height:14.4px;background:#e8e8e8;"></div>
<div style="left:16.5px;top:11.55px;width:458.8px;height:1.1px;background:#5f9a78;"></div>
<div style="left:16.5px;top:52.85px;width:458.8px;height:1.1px;background:#5f9a78;"></div>
<div style="left:16.55px;top:11.6px;width:1.1px;height:42.3px;background:#5f9a78;"></div>
<div class="t" style="left:187.9px;top:24.75px;font-size:16.4px;letter-spacing:0.35px;font-weight:bold;color:#000;">Amortization schedule template</div>
<div class="t" style="left:70.45px;top:68.93px;font-size:9.8px;letter-spacing:0.28px;font-weight:bold;color:#000;">Loan information</div>
<div class="t" style="left:455.1px;top:68.93px;font-size:9.8px;letter-spacing:0.26px;font-weight:bold;color:#000;">Summary</div>
<div class="t" style="left:19px;top:83.33px;font-size:9.8px;letter-spacing:0.28px;color:#111;">Loan amount</div>
<div class="t" style="left:151.96px;top:83.33px;font-size:9.8px;letter-spacing:0.02px;color:#111;">$100,000.00</div>
<div class="t" style="left:19px;top:97.73px;font-size:9.8px;letter-spacing:0.21px;color:#111;">Annual interest rate</div>
<div class="t" style="left:192.87px;top:97.73px;font-size:9.8px;letter-spacing:-0.33px;color:#111;">5%</div>
<div class="t" style="left:19px;top:112.13px;font-size:9.8px;letter-spacing:0.26px;color:#111;">Loan period in months</div>
<div class="t" style="left:195.71px;top:112.13px;font-size:9.8px;letter-spacing:0.08px;color:#111;">12</div>
<div class="t" style="left:19px;top:126.53px;font-size:9.8px;letter-spacing:0.19px;color:#111;">First payment date</div>
<div class="t" style="left:155.55px;top:126.53px;font-size:9.8px;letter-spacing:0.23px;color:#111;">20/12/2024</div>
<div class="t" style="left:340.2px;top:83.33px;font-size:9.8px;letter-spacing:0.17px;color:#111;">Scheduled payment</div>
<div class="t" style="left:340.2px;top:97.73px;font-size:9.8px;letter-spacing:0.21px;color:#111;">Scheduled amount of payments</div>
<div class="t" style="left:340.2px;top:112.13px;font-size:9.8px;letter-spacing:0.23px;color:#111;">Total interest</div>
<div class="t" style="left:340.2px;top:126.53px;font-size:9.8px;letter-spacing:0.25px;color:#111;">Total payment</div>
<div class="t" style="left:67.63px;top:155.33px;font-size:9.8px;letter-spacing:-0.98px;font-weight:bold;color:#000;">№</div>
<div class="t" style="left:146.37px;top:155.33px;font-size:9.8px;letter-spacing:0.28px;font-weight:bold;color:#000;">Due date</div>
<div class="t" style="left:229.5px;top:155.33px;font-size:9.8px;letter-spacing:0.03px;font-weight:bold;color:#000;">Beggining balance</div>
<div class="t" style="left:391.29px;top:155.33px;font-size:9.8px;letter-spacing:0.34px;font-weight:bold;color:#000;">Payment</div>
<div class="t" style="left:69.83px;top:169.73px;font-size:9.8px;letter-spacing:0.08px;color:#111;">1</div>
<div class="t" style="left:142.51px;top:169.73px;font-size:9.8px;letter-spacing:0.23px;color:#111;">20/12/2024</div>
<div class="t" style="left:245.92px;top:169.73px;font-size:9.8px;letter-spacing:0.02px;color:#111;">$105,000.00</div>
<div class="t" style="left:391.05px;top:169.73px;font-size:9.8px;letter-spacing:0.01px;color:#111;">$8,525.23</div>
<div class="t" style="left:69.83px;top:184.13px;font-size:9.8px;letter-spacing:0.08px;color:#111;">2</div>
<div class="t" style="left:142.51px;top:184.13px;font-size:9.8px;letter-spacing:0.23px;color:#111;">20/01/2025</div>
<div class="t" style="left:248.69px;top:184.13px;font-size:9.8px;letter-spacing:0.02px;color:#111;">$96,474.77</div>
<div class="t" style="left:391.05px;top:184.13px;font-size:9.8px;letter-spacing:0.01px;color:#111;">$8,525.23</div>
<div class="t" style="left:69.83px;top:198.53px;font-size:9.8px;letter-spacing:0.08px;color:#111;">3</div>
<div class="t" style="left:142.51px;top:198.53px;font-size:9.8px;letter-spacing:0.23px;color:#111;">18/02/2025</div>
<div class="t" style="left:248.69px;top:198.53px;font-size:9.8px;letter-spacing:0.02px;color:#111;">$87,949.55</div>
<div class="t" style="left:391.05px;top:198.53px;font-size:9.8px;letter-spacing:0.01px;color:#111;">$8,525.23</div>
<div class="t" style="left:69.83px;top:212.93px;font-size:9.8px;letter-spacing:0.08px;color:#111;">4</div>
<div class="t" style="left:142.51px;top:212.93px;font-size:9.8px;letter-spacing:0.23px;color:#111;">19/03/2025</div>
<div class="t" style="left:248.69px;top:212.93px;font-size:9.8px;letter-spacing:0.02px;color:#111;">$79,424.32</div>
<div class="t" style="left:391.05px;top:212.93px;font-size:9.8px;letter-spacing:0.01px;color:#111;">$8,525.23</div>
<div class="t" style="left:69.83px;top:227.33px;font-size:9.8px;letter-spacing:0.08px;color:#111;">5</div>
<div class="t" style="left:142.51px;top:227.33px;font-size:9.8px;letter-spacing:0.23px;color:#111;">17/04/2025</div>
<div class="t" style="left:248.69px;top:227.33px;font-size:9.8px;letter-spacing:0.02px;color:#111;">$70,899.09</div>
<div class="t" style="left:391.05px;top:227.33px;font-size:9.8px;letter-spacing:0.01px;color:#111;">$8,525.23</div>
<div class="t" style="left:69.83px;top:241.73px;font-size:9.8px;letter-spacing:0.08px;color:#111;">6</div>
<div class="t" style="left:142.51px;top:241.73px;font-size:9.8px;letter-spacing:0.23px;color:#111;">16/05/2025</div>
<div class="t" style="left:248.69px;top:241.73px;font-size:9.8px;letter-spacing:0.02px;color:#111;">$62,373.87</div>
<div class="t" style="left:391.05px;top:241.73px;font-size:9.8px;letter-spacing:0.01px;color:#111;">$8,525.23</div>
<div class="t" style="left:69.83px;top:256.13px;font-size:9.8px;letter-spacing:0.08px;color:#111;">7</div>
<div class="t" style="left:142.51px;top:256.13px;font-size:9.8px;letter-spacing:0.23px;color:#111;">16/06/2025</div>
<div class="t" style="left:248.69px;top:256.13px;font-size:9.8px;letter-spacing:0.02px;color:#111;">$53,848.64</div>
<div class="t" style="left:391.05px;top:256.13px;font-size:9.8px;letter-spacing:0.01px;color:#111;">$8,525.23</div>
</div>
<div style="left:703px;top:126px;width:9.7px;height:269px;background:#e2e2e2;"></div>
<div style="left:703.3px;top:126.2px;width:8.6px;height:8px;background:#f5f5f5;border:.7px solid #d6d6d6;border-radius:1px;"></div>
<svg viewBox="0 0 8 8" style="left:705.5px;top:128.2px;width:4.2px;height:4.2px;color:#adadad;"><path d="M1 5.5 L4 2.5 L7 5.5 Z" fill="currentColor"/></svg>
<div style="left:703.3px;top:134.7px;width:8.6px;height:79px;background:#f5f5f5;border:.7px solid #d6d6d6;border-radius:1px;"></div>
<div style="left:705.6px;top:172.25px;width:4px;height:0.7px;background:#cfcfcf;"></div>
<div style="left:705.6px;top:173.65px;width:4px;height:0.7px;background:#cfcfcf;"></div>
<div style="left:705.6px;top:175.05px;width:4px;height:0.7px;background:#cfcfcf;"></div>
<div style="left:703.3px;top:386.6px;width:8.6px;height:8px;background:#f5f5f5;border:.7px solid #d6d6d6;border-radius:1px;"></div>
<svg viewBox="0 0 8 8" style="left:705.5px;top:388.5px;width:4.2px;height:4.2px;color:#adadad;"><path d="M1 2.5 L4 5.5 L7 2.5 Z" fill="currentColor"/></svg>
<div style="left:227.7px;top:395.2px;width:485px;height:9.2px;background:#e2e2e2;"></div>
<div style="left:228.4px;top:395.6px;width:7.8px;height:8px;background:#f5f5f5;border:.7px solid #d6d6d6;border-radius:1px;"></div>
<svg viewBox="0 0 8 8" style="left:230.2px;top:397.5px;width:4.2px;height:4.2px;color:#adadad;"><path d="M5.5 1 L2.5 4 L5.5 7 Z" fill="currentColor"/></svg>
<div style="left:237px;top:395.6px;width:304.4px;height:8px;background:#f5f5f5;border:.7px solid #d6d6d6;border-radius:1px;"></div>
<div style="left:387.25px;top:397.8px;width:0.7px;height:3.6px;background:#cfcfcf;"></div>
<div style="left:388.65px;top:397.8px;width:0.7px;height:3.6px;background:#cfcfcf;"></div>
<div style="left:390.05px;top:397.8px;width:0.7px;height:3.6px;background:#cfcfcf;"></div>
<div style="left:694.6px;top:395.6px;width:7.8px;height:8px;background:#f5f5f5;border:.7px solid #d6d6d6;border-radius:1px;"></div>
<svg viewBox="0 0 8 8" style="left:696.4px;top:397.5px;width:4.2px;height:4.2px;color:#adadad;"><path d="M2.5 1 L5.5 4 L2.5 7 Z" fill="currentColor"/></svg>
<div style="left:712.8px;top:109.7px;width:173.2px;height:295px;background:#f1f1f1;"></div>
<div style="left:712.4px;top:109.7px;width:1px;height:294.8px;background:#d0d0d0;"></div>
<div style="left:859.3px;top:109.7px;width:1px;height:294.8px;background:#cbcbcb;"></div>
<div class="t" style="left:723.3px;top:114.39px;font-size:8px;letter-spacing:-0.09px;font-weight:bold;">Fill</div>
<div style="left:723px;top:124.6px;width:129px;height:14.8px;background:#fff;border:.7px solid #d9d9d9;border-radius:1px;"></div>
<div class="t" style="left:725.8px;top:127.19px;font-size:8px;letter-spacing:-0.17px;">Color fill</div>
<svg viewBox="0 0 8 8" style="left:844.8px;top:130px;width:4.4px;height:4.4px;color:#444;"><path d="M0.9 2.1 L4 5.9 L7.1 2.1" fill="none" stroke="currentColor" stroke-width="1.5"/></svg>
<div style="left:723px;top:144.4px;width:29.5px;height:14.2px;background:#fff;border:.7px solid #d9d9d9;border-radius:1px;"></div>
<div style="left:724.3px;top:145.6px;width:20.8px;height:11.8px;background:#ececec;border:.7px solid #c8c8c8;"></div>
<svg viewBox="0 0 8 8" style="left:746.4px;top:149.6px;width:4.4px;height:4.4px;color:#444;"><path d="M0.9 2.1 L4 5.9 L7.1 2.1" fill="none" stroke="currentColor" stroke-width="1.5"/></svg>
<div style="left:723px;top:164.2px;width:129px;height:1px;background:#d8d8d8;"></div>
<div class="t" style="left:723.3px;top:170.39px;font-size:8px;letter-spacing:-0.24px;font-weight:bold;">Borders style</div>
<div style="left:723px;top:186.4px;width:61.8px;height:14.2px;background:#fff;border:.7px solid #d9d9d9;border-radius:1px;"></div>
<div style="left:730px;top:193.1px;width:40px;height:0.8px;background:#555;"></div>
<svg viewBox="0 0 8 8" style="left:777.6px;top:191.6px;width:4.4px;height:4.4px;color:#444;"><path d="M0.9 2.1 L4 5.9 L7.1 2.1" fill="none" stroke="currentColor" stroke-width="1.5"/></svg>
<div class="t" style="left:802px;top:189.49px;font-size:8px;letter-spacing:-0.38px;">Color</div>
<div style="left:822.5px;top:186.4px;width:29.6px;height:14.2px;background:#fff;border:.7px solid #d9d9d9;border-radius:1px;"></div>
<div style="left:823.8px;top:187.6px;width:21.2px;height:11.8px;background:#000;"></div>
<svg viewBox="0 0 8 8" style="left:845.6px;top:191.6px;width:4.4px;height:4.4px;color:#444;"><path d="M0.9 2.1 L4 5.9 L7.1 2.1" fill="none" stroke="currentColor" stroke-width="1.5"/></svg>
<div class="t" style="left:723.3px;top:207.09px;font-size:8px;letter-spacing:-0.33px;color:#666;">Select borders you want to change</div>
<div class="t" style="left:723.3px;top:218.09px;font-size:8px;letter-spacing:-0.33px;color:#666;">applying style chosen above</div>
<svg viewBox="0 0 12 12" style="left:725.3px;top:234.9px;width:9px;height:9px;color:#333;"><path d="M1.5 1.5 H10.5 V10.5 H1.5 Z M6 1.5 V10.5 M1.5 6 H10.5" fill="none" stroke="currentColor" stroke-width="0.8" opacity=".25"/><path d="M1.5 1.5 H10.5 V10.5 H1.5 Z M6 1.5 V10.5 M1.5 6 H10.5" fill="none" stroke="currentColor" stroke-width="1.0"/></svg>
<svg viewBox="0 0 12 12" style="left:741.2px;top:234.9px;width:9px;height:9px;color:#333;"><path d="M1.5 1.5 H10.5 V10.5 H1.5 Z M6 1.5 V10.5 M1.5 6 H10.5" fill="none" stroke="currentColor" stroke-width="0.8" opacity=".25"/><path d="" fill="none" stroke="currentColor" stroke-width="1.0"/></svg>
<svg viewBox="0 0 12 12" style="left:757.4px;top:234.9px;width:9px;height:9px;color:#333;"><path d="M1.5 1.5 H10.5 V10.5 H1.5 Z M6 1.5 V10.5 M1.5 6 H10.5" fill="none" stroke="currentColor" stroke-width="0.8" opacity=".25"/><path d="M6 1.5 V10.5 M1.5 6 H10.5" fill="none" stroke="currentColor" stroke-width="1.0"/></svg>
<svg viewBox="0 0 12 12" style="left:773.4px;top:234.9px;width:9px;height:9px;color:#333;"><path d="M1.5 1.5 H10.5 V10.5 H1.5 Z M6 1.5 V10.5 M1.5 6 H10.5" fill="none" stroke="currentColor" stroke-width="0.8" opacity=".25"/><path d="M1.5 1.5 H10.5 V10.5 H1.5 Z" fill="none" stroke="currentColor" stroke-width="1.0"/></svg>
<svg viewBox="0 0 12 12" style="left:789.5px;top:234.9px;width:9px;height:9px;color:#333;"><path d="M1.5 1.5 H10.5 V10.5 H1.5 Z" fill="none" stroke="currentColor" stroke-width="0.8" opacity=".25"/><path d="M1.5 10.5 L10.5 1.5" fill="none" stroke="currentColor" stroke-width="1.0"/></svg>
<svg viewBox="0 0 12 12" style="left:805.9px;top:234.9px;width:9px;height:9px;color:#333;"><path d="M1.5 1.5 H10.5 V10.5 H1.5 Z" fill="none" stroke="currentColor" stroke-width="0.8" opacity=".25"/><path d="M1.5 1.5 L10.5 10.5" fill="none" stroke="currentColor" stroke-width="1.0"/></svg>
<svg viewBox="0 0 12 12" style="left:725.3px;top:254px;width:9px;height:9px;color:#333;"><path d="M1.5 1.5 H10.5 V10.5 H1.5 Z M6 1.5 V10.5 M1.5 6 H10.5" fill="none" stroke="currentColor" stroke-width="0.8" opacity=".25"/><path d="M1.5 1.5 V10.5" fill="none" stroke="currentColor" stroke-width="1.0"/></svg>
<svg viewBox="0 0 12 12" style="left:741.2px;top:254px;width:9px;height:9px;color:#333;"><path d="M1.5 1.5 H10.5 V10.5 H1.5 Z M6 1.5 V10.5 M1.5 6 H10.5" fill="none" stroke="currentColor" stroke-width="0.8" opacity=".25"/><path d="M6 1.5 V10.5" fill="none" stroke="currentColor" stroke-width="1.0"/></svg>
<svg viewBox="0 0 12 12" style="left:757.4px;top:254px;width:9px;height:9px;color:#333;"><path d="M1.5 1.5 H10.5 V10.5 H1.5 Z M6 1.5 V10.5 M1.5 6 H10.5" fill="none" stroke="currentColor" stroke-width="0.8" opacity=".25"/><path d="M10.5 1.5 V10.5" fill="none" stroke="currentColor" stroke-width="1.0"/></svg>
<svg viewBox="0 0 12 12" style="left:773.4px;top:254px;width:9px;height:9px;color:#333;"><path d="M1.5 1.5 H10.5 V10.5 H1.5 Z M6 1.5 V10.5 M1.5 6 H10.5" fill="none" stroke="currentColor" stroke-width="0.8" opacity=".25"/><path d="M1.5 1.5 H10.5" fill="none" stroke="currentColor" stroke-width="1.0"/></svg>
<svg viewBox="0 0 12 12" style="left:789.5px;top:254px;width:9px;height:9px;color:#333;"><path d="M1.5 1.5 H10.5 V10.5 H1.5 Z M6 1.5 V10.5 M1.5 6 H10.5" fill="none" stroke="currentColor" stroke-width="0.8" opacity=".25"/><path d="M1.5 6 H10.5" fill="none" stroke="currentColor" stroke-width="1.0"/></svg>
<svg viewBox="0 0 12 12" style="left:805.9px;top:254px;width:9px;height:9px;color:#333;"><path d="M1.5 1.5 H10.5 V10.5 H1.5 Z M6 1.5 V10.5 M1.5 6 H10.5" fill="none" stroke="currentColor" stroke-width="0.8" opacity=".25"/><path d="M1.5 10.5 H10.5" fill="none" stroke="currentColor" stroke-width="1.0"/></svg>
<div style="left:723px;top:270.8px;width:129px;height:1px;background:#d8d8d8;"></div>
<div class="t" style="left:723.3px;top:277.39px;font-size:8px;letter-spacing:-0.23px;font-weight:bold;">Indent</div>
<div style="left:723px;top:287.4px;width:39.8px;height:14.3px;background:#fff;border:.7px solid #d9d9d9;border-radius:1px;"></div>
<div class="t" style="left:745.38px;top:290.69px;font-size:8px;">0</div>
<svg viewBox="0 0 8 8" style="left:754.1px;top:288.9px;width:5px;height:5px;color:#444;"><path d="M1 5.5 L4 2.5 L7 5.5" fill="none" stroke="currentColor" stroke-width="1.3"/></svg>
<svg viewBox="0 0 8 8" style="left:754.1px;top:295.3px;width:5px;height:5px;color:#444;"><path d="M1 2.5 L4 5.5 L7 2.5" fill="none" stroke="currentColor" stroke-width="1.3"/></svg>
<div class="t" style="left:723.3px;top:312.99px;font-size:8px;letter-spacing:-0.28px;font-weight:bold;">Text orientation</div>
<div class="t" style="left:723.3px;top:331.49px;font-size:8px;letter-spacing:-0.41px;">Angle</div>
<div style="left:747.2px;top:328.6px;width:39.4px;height:14.3px;background:#fff;border:.7px solid #d9d9d9;border-radius:1px;"></div>
<div class="t" style="left:764.46px;top:331.69px;font-size:8px;">0 °</div>
<svg viewBox="0 0 8 8" style="left:778.5px;top:330.1px;width:5px;height:5px;color:#444;"><path d="M1 5.5 L4 2.5 L7 5.5" fill="none" stroke="currentColor" stroke-width="1.3"/></svg>
<svg viewBox="0 0 8 8" style="left:778.5px;top:336.5px;width:5px;height:5px;color:#444;"><path d="M1 2.5 L4 5.5 L7 2.5" fill="none" stroke="currentColor" stroke-width="1.3"/></svg>
<div class="t" style="left:723.3px;top:354.19px;font-size:8px;letter-spacing:-0.3px;font-weight:bold;">Text control</div>
<div style="left:723.4px;top:370px;width:9.2px;height:9.2px;background:#fff;border:.7px solid #cdcdcd;border-radius:1px;"></div>
<div class="t" style="left:737.8px;top:370.59px;font-size:8px;letter-spacing:-0.34px;">Wrap text</div>
<div style="left:723.4px;top:386px;width:9.2px;height:9.2px;background:#fff;border:.7px solid #cdcdcd;border-radius:1px;"></div>
<div class="t" style="left:737.8px;top:386.59px;font-size:8px;letter-spacing:-0.28px;">Shrink to fit</div>
<div style="left:723px;top:401.1px;width:129px;height:1px;background:#d8d8d8;"></div>
<div style="left:860.3px;top:120px;width:25.7px;height:18.8px;background:#7d858c;"></div>
<svg viewBox="0 0 20 20" style="left:864.7px;top:121.3px;width:16.2px;height:16.2px;color:#fff;"><path d="M4.5 5.5 H15.5 V14.5 H4.5 Z" fill="none" stroke="currentColor" stroke-width="1.1"/><path d="M6.5 7.5 H13.5 V12.5 H6.5 Z M6.5 10 H13.5" fill="none" stroke="currentColor" stroke-width="1"/></svg>
<svg viewBox="0 0 20 20" style="left:864.7px;top:146.65px;width:16.2px;height:16.2px;color:#444;opacity:0.42;"><path d="M4.5 5.5 H15.5 V14.5 H4.5 Z M4.5 8.5 H15.5 M8.2 5.5 V14.5 M11.8 5.5 V14.5" fill="none" stroke="currentColor" stroke-width="1.1"/></svg>
<svg viewBox="0 0 20 20" style="left:864.7px;top:172px;width:16.2px;height:16.2px;color:#444;opacity:0.42;"><path d="M8 8 H4.5 V3.5 H11.5 V6" fill="none" stroke="currentColor" stroke-width="1.1"/><circle cx="11.5" cy="11.5" r="4" fill="none" stroke="currentColor" stroke-width="1.1"/></svg>
<svg viewBox="0 0 20 20" style="left:864.7px;top:197.35px;width:16.2px;height:16.2px;color:#444;opacity:0.42;"><path d="M4.5 4.5 H15.5 V15.5 H4.5 Z M4.5 13 L8.5 9.5 L11 12 L13 10.5 L15.5 12.5" fill="none" stroke="currentColor" stroke-width="1.1"/><circle cx="12.5" cy="7.5" r="1" fill="currentColor"/></svg>
<svg viewBox="0 0 20 20" style="left:864.7px;top:222.7px;width:16.2px;height:16.2px;color:#444;opacity:0.42;"><path d="M4.5 12.5 H6.5 V15.5 H4.5 Z M8.8 9.5 H10.8 V15.5 H8.8 Z M13 5.5 H15 V15.5 H13 Z" fill="none" stroke="currentColor" stroke-width="1.1"/></svg>
<div class="t" style="left:869.88px;top:250.17px;font-size:10.5px;font-weight:bold;opacity:0.42;">¶</div>
<div class="t" style="left:868.26px;top:275.24px;font-size:8.6px;opacity:0.42;">Ta</div>
<svg viewBox="0 0 20 20" style="left:868.3px;top:281.8px;width:9px;height:9px;color:#444;opacity:0.42;"><path d="M3 8 Q10 2 17 8" fill="none" stroke="currentColor" stroke-width="1.2"/></svg>
<svg viewBox="0 0 20 20" style="left:864.7px;top:298.75px;width:16.2px;height:16.2px;color:#444;opacity:0.42;"><path d="M4.5 4.5 H7.5 V7.5 H4.5 Z M9.5 4.5 H15.5 V7.5 H9.5 Z M4.5 9.5 H7.5 V15.5 H4.5 Z" fill="none" stroke="currentColor" stroke-width="1.1"/><path d="M15.5 9.5 V14 H10.5 M12.5 12 L10.5 14 L12.5 16" fill="none" stroke="currentColor" stroke-width="1"/></svg>
<svg viewBox="0 0 20 20" style="left:864.7px;top:324.1px;width:16.2px;height:16.2px;color:#444;opacity:0.42;"><path d="M4.5 4.5 H14.5 V12.5 H4.5 Z" fill="currentColor"/><path d="M10.5 14.5 H16.5 L14.5 17 V19 M10.5 14.5 L12.5 17" fill="none" stroke="currentColor" stroke-width="1.1"/></svg>
<svg viewBox="0 0 20 20" style="left:864.7px;top:349.45px;width:16.2px;height:16.2px;color:#444;opacity:0.42;"><path d="M5.5 3.5 V16.5 M3.5 9.5 H8.5 M5.5 16.5 H10" fill="none" stroke="currentColor" stroke-width="1.1"/><path d="M9.5 14.5 L15.5 5 L17 6.5 L12 15.5 Z" fill="none" stroke="currentColor" stroke-width="1"/></svg>
<div style="left:200.6px;top:404px;width:685.4px;height:1px;background:#d6d6d6;"></div>
<svg viewBox="0 0 12 12" style="left:211.6px;top:409.3px;width:8.4px;height:8.4px;color:#c0c0c0;"><path d="M8 1.5 L3.5 6 L8 10.5" fill="none" stroke="currentColor" stroke-width="1.1"/></svg>
<svg viewBox="0 0 12 12" style="left:227px;top:409.3px;width:8.4px;height:8.4px;color:#c0c0c0;"><path d="M4 1.5 L8.5 6 L4 10.5" fill="none" stroke="currentColor" stroke-width="1.1"/></svg>
<div style="left:246.1px;top:405px;width:1px;height:15.8px;background:#cbcbcb;"></div>
<svg viewBox="0 0 10 10" style="left:254.8px;top:409.4px;width:8.2px;height:8.2px;color:#444;"><path d="M5 .8 V9.2 M.8 5 H9.2" fill="none" stroke="currentColor" stroke-width="0.95"/></svg>
<svg viewBox="0 0 10 10" style="left:270.4px;top:409.5px;width:8px;height:8px;color:#666;"><path d="M1 1.5 H9 M1 4 H9 M1 6.5 H9 M1 9 H9" fill="none" stroke="currentColor" stroke-width="0.9"/></svg>
<div style="left:286.6px;top:405px;width:94.8px;height:15.8px;background:#fff;border-left:.8px solid #cbcbcb;border-right:.8px solid #cbcbcb;"></div>
<div style="left:286.6px;top:404.4px;width:94.8px;height:2.3px;background:#848484;"></div>
<div class="t" style="left:294px;top:408.99px;font-size:8px;letter-spacing:-0.29px;font-weight:bold;">Amortization schedule</div>
<div style="left:778.2px;top:413.1px;width:6.6px;height:1px;background:#555;"></div>
<div class="t" style="left:796.3px;top:408.89px;font-size:8px;letter-spacing:-0.36px;font-weight:bold;">Zoom 100%</div>
<svg viewBox="0 0 10 10" style="left:848.5px;top:409.5px;width:8px;height:8px;color:#444;"><path d="M5 .8 V9.2 M.8 5 H9.2" fill="none" stroke="currentColor" stroke-width="0.95"/></svg>
</body></html>
